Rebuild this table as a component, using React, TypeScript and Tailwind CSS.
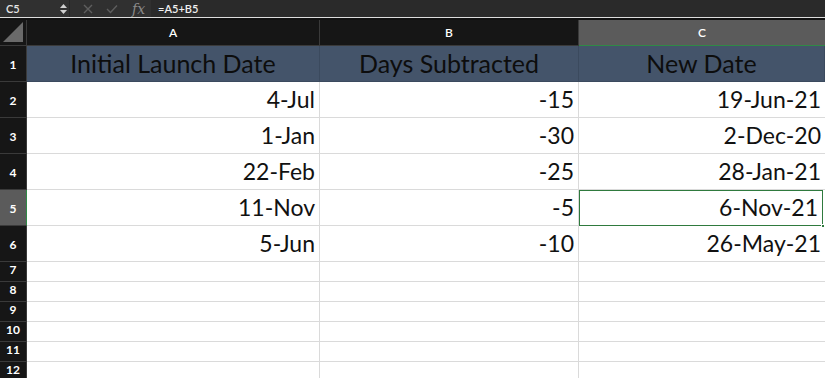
import React from "react";

const FONT = { fontFamily: "Lato, 'Open Sans', sans-serif" };

type Row = { a: string; b: string; c: string };

const data: Row[] = [
  { a: "4-Jul", b: "-15", c: "19-Jun-21" },
  { a: "1-Jan", b: "-30", c: "2-Dec-20" },
  { a: "22-Feb", b: "-25", c: "28-Jan-21" },
  { a: "11-Nov", b: "-5", c: "6-Nov-21" },
  { a: "5-Jun", b: "-10", c: "26-May-21" },
];

const colTemplate = "grid grid-cols-[27px_293px_259px_1fr]";

function RowHead({ n, active, tall }: { n: number; active?: boolean; tall?: boolean }) {
  return (
    <div
      className={`flex items-end justify-center border-r border-b border-[#3a3a3a] text-[12px] font-bold text-white leading-none ${
        tall ? "pb-[10px]" : "pb-[5px]"
      } ${active ? "bg-[#5b5b5b] border-r-[#2f8a46]" : "bg-[#161616]"}`}
    >
      {n}
    </div>
  );
}

export default function App() {
  return (
    <div className="w-[825px] h-[378px] overflow-hidden bg-white" style={FONT}>
      {/* formula bar */}
      <div className="h-[17px] flex items-center bg-[#303030] text-[#e6e6e6]">
        <div className="w-[58px] pl-[6px] text-[11px] font-semibold leading-none">C5</div>
        <div className="w-[10px] flex flex-col items-center gap-[2px]">
          <svg width="7" height="4" viewBox="0 0 7 4"><path d="M0 4 L3.5 0 L7 4 Z" fill="#cfcfcf" /></svg>
          <svg width="7" height="4" viewBox="0 0 7 4"><path d="M0 0 L3.5 4 L7 0 Z" fill="#cfcfcf" /></svg>
        </div>
        <div className="w-px h-[17px] bg-[#262626] ml-[1px]" />
        <div className="ml-[12px] w-[12px] flex justify-center">
          <svg width="10" height="10" viewBox="0 0 10 10">
            <path d="M1 1 L9 9 M9 1 L1 9" stroke="#5e5e5e" strokeWidth="1.4" />
          </svg>
        </div>
        <div className="ml-[12px] w-[12px] flex justify-center">
          <svg width="12" height="10" viewBox="0 0 12 10">
            <path d="M1 5 L4.5 8.5 L11 1.5" stroke="#5e5e5e" strokeWidth="1.4" fill="none" />
          </svg>
        </div>
        <div
          className="ml-[14px] text-[14px] italic text-[#8a8a8a] leading-none"
          style={{ fontFamily: "'DejaVu Serif', 'Liberation Serif', serif" }}
        >
          fx
        </div>
        <div className="ml-[6px] flex-1 h-[17px] flex items-center bg-[#2a2a2a] pl-[7px] text-[11px] font-semibold text-[#f0f0f0] leading-none">
          =A5+B5
        </div>
      </div>
      <div className="h-px bg-[#dcdcdc]" />
      <div className="h-[2px] bg-[#111]" />

      {/* column headers */}
      <div className={`${colTemplate} h-[26px] text-[12px] font-semibold text-white`}>
        <div className="relative bg-[#161616] border-r border-b border-[#3a3a3a] overflow-hidden">
          <svg className="absolute right-[3px] bottom-[3px]" width="20" height="20" viewBox="0 0 20 20">
            <path d="M20 0 L20 20 L0 20 Z" fill="#6a6a6a" />
          </svg>
        </div>
        <div className="flex items-center justify-center bg-[#161616] border-r border-b border-[#3a3a3a]">A</div>
        <div className="flex items-center justify-center bg-[#161616] border-r border-b border-[#3a3a3a]">B</div>
        <div className="flex items-center justify-center bg-[#5b5b5b] border-b border-[#2f8a46]">C</div>
      </div>

      {/* header row */}
      <div className={`${colTemplate} h-[36px]`}>
        <RowHead n={1} tall />
        {["Initial Launch Date", "Days Subtracted", "New Date"].map((t) => (
          <div
            key={t}
            className="flex items-end justify-center bg-[#44546a] border-r border-b border-[#3b4a5e] pb-[5px] text-[25px] leading-none text-[#0d0d0d]"
          >
            {t}
          </div>
        ))}
      </div>

      {/* data rows */}
      {data.map((r, i) => {
        const active = i === 3;
        return (
          <div key={i} className={`${colTemplate} h-[36px]`}>
            <RowHead n={i + 2} tall active={active} />
            <div className="flex items-end justify-end border-r border-b border-[#dadada] pr-[4px] pb-[6px] text-[23px] leading-none text-[#111]">
              {r.a}
            </div>
            <div className="flex items-end justify-end border-r border-b border-[#dadada] pr-[4px] pb-[6px] text-[23px] leading-none text-[#111]">
              {r.b}
            </div>
            <div
              className={`relative flex items-end justify-end border-b pr-[4px] pb-[6px] text-[23px] leading-none text-[#111] ${
                active ? "border border-[#2f7a3e] mr-[2px]" : "border-[#dadada]"
              }`}
            >
              {r.c}
              {active && (
                <div className="absolute right-[-3px] bottom-[-3px] w-[4px] h-[4px] bg-[#2f7a3e] border border-white" />
              )}
            </div>
          </div>
        );
      })}

      {/* empty rows */}
      {[7, 8, 9, 10, 11, 12].map((n) => (
        <div key={n} className={`${colTemplate} h-[20px]`}>
          <RowHead n={n} />
          <div className="border-r border-b border-[#dadada]" />
          <div className="border-r border-b border-[#dadada]" />
          <div className="border-b border-[#dadada]" />
        </div>
      ))}
    </div>
  );
}
